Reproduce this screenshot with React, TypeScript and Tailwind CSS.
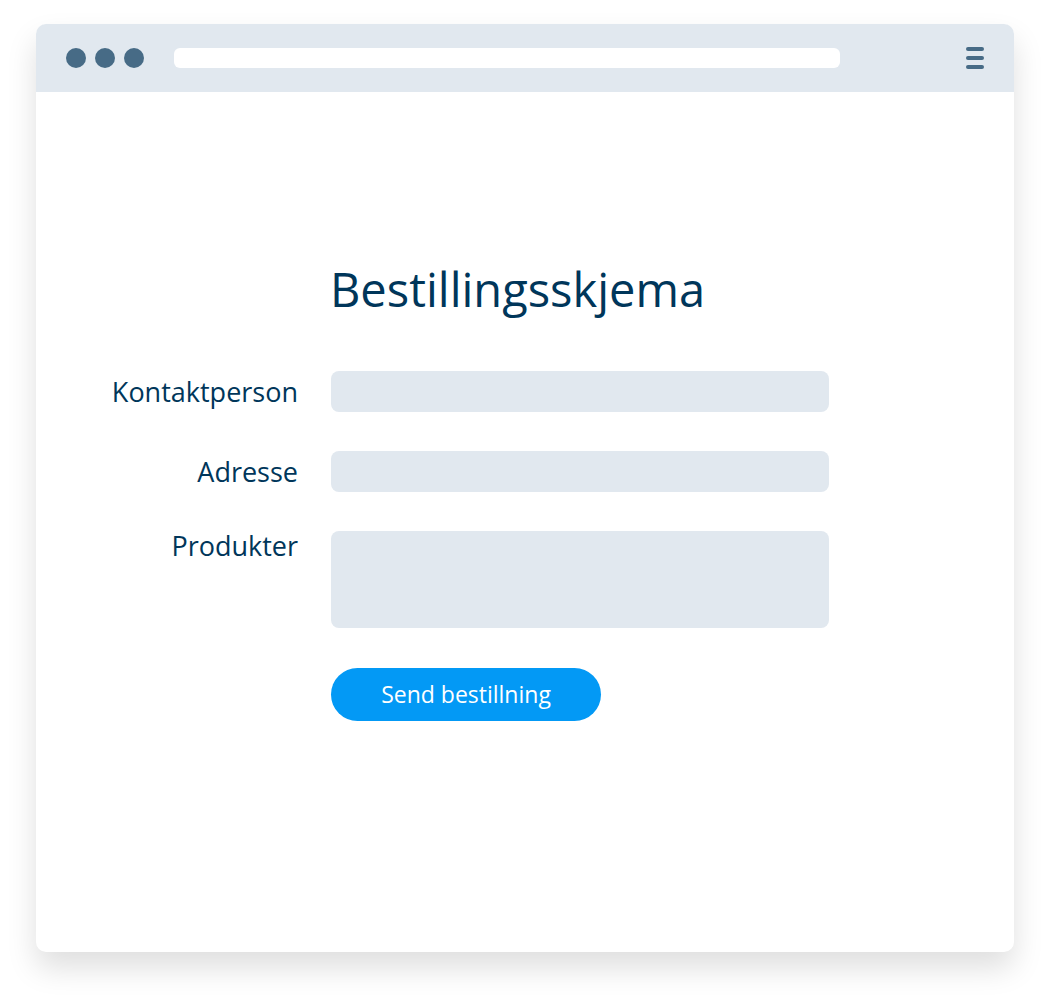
export default function App() {
    return (
        <div className="min-h-[1000px] bg-white pl-[36px] pt-[24px]" style={{ fontFamily: '"Open Sans", sans-serif' }}>
            {/* BROWSER WINDOW */}
            <div className="w-[978px] h-[928px] rounded-[10px] bg-white overflow-hidden shadow-[0_16px_30px_rgba(0,0,0,0.13)]">
                {/* TOOLBAR */}
                <div className="h-[68px] bg-[#e1e8ef] flex items-center pl-[30px] pr-[30px]">
                    <div className="flex gap-[9px]">
                        <span className="w-[20px] h-[20px] rounded-full bg-[#476b86]" />
                        <span className="w-[20px] h-[20px] rounded-full bg-[#476b86]" />
                        <span className="w-[20px] h-[20px] rounded-full bg-[#476b86]" />
                    </div>
                    <div className="ml-[30px] w-[666px] h-[20px] rounded-[6px] bg-white" />
                    <div className="ml-auto flex flex-col gap-[5px]">
                        <span className="w-[18px] h-[4px] rounded-full bg-[#476b86]" />
                        <span className="w-[18px] h-[4px] rounded-full bg-[#476b86]" />
                        <span className="w-[18px] h-[4px] rounded-full bg-[#476b86]" />
                    </div>
                </div>

                {/* ORDER FORM */}
                <div className="pl-[62px] pt-[165px]">
                    <div className="grid grid-cols-[200px_498px] gap-x-[33px] text-[#00365a]">
                        <div />
                        <h1 className="text-[47px] leading-[64px] mb-[50px] -ml-[1px]">Bestillingsskjema</h1>

                        <label className="text-[27px] leading-[41px] text-right whitespace-nowrap">Kontaktperson</label>
                        <div className="h-[41px] rounded-[8px] bg-[#e1e8ef] mb-[39px]" />

                        <label className="text-[27px] leading-[41px] text-right">Adresse</label>
                        <div className="h-[41px] rounded-[8px] bg-[#e1e8ef] mb-[39px]" />

                        <label className="text-[27px] leading-[30px] text-right">Produkter</label>
                        <div className="h-[97px] rounded-[8px] bg-[#e1e8ef] mb-[40px]" />

                        <div />
                        <button className="w-[270px] h-[53px] rounded-full bg-[#0399f5] text-white text-[23px]">
                            Send bestillning
                        </button>
                    </div>
                </div>
            </div>
        </div>
    )
}
